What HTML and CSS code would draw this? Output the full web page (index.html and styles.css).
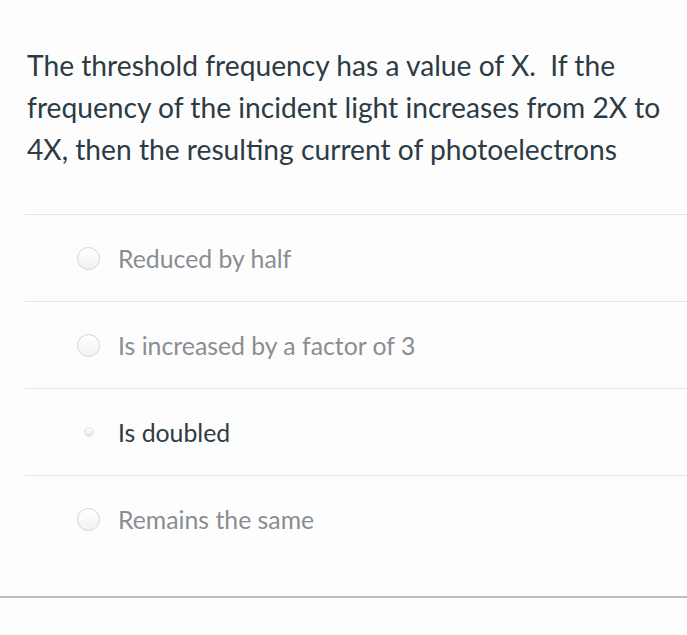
FILE: index.html
```html
<!DOCTYPE html>
<html>
<head>
<meta charset="utf-8">
<link rel="stylesheet" href="styles.css">
</head>
<body>
<div class="quiz">
  <div class="question">The threshold frequency has a value of X.&nbsp; If the frequency of the incident light increases from 2X to 4X, then the resulting current of photoelectrons</div>
  <ul class="answers">
    <li class="answer"><span class="radio"></span><span class="label">Reduced by half</span></li>
    <li class="answer"><span class="radio"></span><span class="label">Is increased by a factor of 3</span></li>
    <li class="answer selected"><span class="radio small"></span><span class="label">Is doubled</span></li>
    <li class="answer"><span class="radio"></span><span class="label">Remains the same</span></li>
  </ul>
</div>
<div class="footer-line"></div>
</body>
</html>
```
FILE: styles.css
```css
html, body {
  margin: 0;
  padding: 0;
  background: #fdfdfd;
}
body {
  font-family: Lato, "Open Sans", sans-serif;
  color: #2d3b45;
}
.quiz {
  padding-top: 44px;
}
.question {
  padding-left: 27px;
  padding-right: 12px;
  font-size: 28.2px;
  line-height: 42px;
  height: 170px;
}
.answers {
  list-style: none;
  margin: 0 0 0 25px;
  padding: 0;
}
.answer {
  border-top: 1px solid #e6e6e6;
  height: 86px;
  display: flex;
  align-items: center;
  padding-left: 52px;
  gap: 18px;
}
.label {
  font-size: 24.8px;
  color: #8a8d91;
}
.selected .label {
  color: #2d3b45;
}
.radio {
  width: 23px;
  height: 23px;
  border-radius: 50%;
  border: 1px solid #d4d4d4;
  background: linear-gradient(#ffffff, #f2f2f2);
  box-sizing: border-box;
  flex: none;
}
.radio.small {
  width: 10px;
  height: 10px;
  margin: 0 6px 0 7px;
  border-color: #e2e2e2;
  background: linear-gradient(#ffffff, #e4e4e4);
}
.footer-line {
  margin-top: 34px;
  height: 2px;
  background: #bdbdbd;
}
```
